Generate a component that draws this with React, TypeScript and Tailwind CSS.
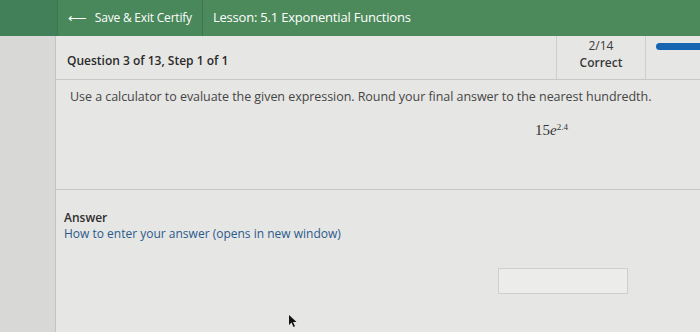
import React from "react";

export default function App() {
  return (
    <div className="w-[700px] h-[332px] overflow-hidden flex flex-col bg-[#e6e6e4] font-['Open_Sans',sans-serif]">
      <header className="h-[36px] flex items-stretch bg-[#4c8a5b] text-white shrink-0">
        <div className="w-[58px] bg-[#42805a] border-r border-[#3c7650]" />
        <button className="flex items-center gap-[8px] px-[10px] border-r border-[#3c7650] bg-[#48885a] text-[12px] tracking-[-0.2px]">
          <span className="text-[13px] leading-none">⟵</span>
          <span>Save &amp; Exit Certify</span>
        </button>
        <div className="flex items-center pl-[10px] text-[13px] tracking-[-0.2px]">Lesson: 5.1 Exponential Functions</div>
      </header>
      <div className="flex flex-1 min-h-0">
        <aside className="w-[56px] bg-[#d8d8d6] border-r border-[#c4c4c2] shrink-0" />
        <main className="flex-1 flex flex-col min-w-0">
          <div className="h-[44px] flex border-b border-[#c8c8c6] shrink-0">
            <div className="flex-1 flex items-end pb-[9px] pl-[11px] text-[12px] font-semibold text-[#2a2a2a]">
              Question 3 of 13, Step 1 of 1
            </div>
            <div className="w-[90px] border-l border-r border-[#cfcfcd] flex flex-col items-center pt-[1px] text-[12px] leading-[17px] text-[#3a3a3a]">
              <span>2/14</span>
              <span className="font-semibold">Correct</span>
            </div>
            <div className="w-[54px] pt-[7px] pl-[10px]">
              <div className="h-[7px] rounded-l-full bg-[#1565b0]" />
            </div>
          </div>
          <div className="h-[110px] border-b border-[#c8c8c6] pt-[8px] pl-[14px] shrink-0">
            <p className="text-[12.5px] text-[#454545] tracking-[-0.05px]">
              Use a calculator to evaluate the given expression. Round your final answer to the nearest hundredth.
            </p>
            <div className="mt-[12px] pl-[465px] text-[15px] text-[#333] font-['Liberation_Serif',serif]">
              15<i>e</i>
              <sup className="text-[9px]">2.4</sup>
            </div>
          </div>
          <div className="flex-1 pl-[8px] pt-[20px] relative">
            <div className="text-[12px] font-semibold text-[#2e2e2e] leading-[16px]">Answer</div>
            <a className="text-[12px] text-[#2a5a8c] leading-[16px] block">How to enter your answer (opens in new window)</a>
            <div className="ml-[434px] mt-[26px] w-[130px] h-[26px] border border-[#cfcfcd] bg-[#ececea]" />
            <svg className="absolute left-[232px] top-[124px]" width="10" height="14" viewBox="0 0 10 14">
              <path d="M1 1 L1 11 L3.5 8.5 L5.5 13 L7 12.3 L5 8 L8.5 8 Z" fill="#111" />
            </svg>
          </div>
        </main>
      </div>
    </div>
  );
}
